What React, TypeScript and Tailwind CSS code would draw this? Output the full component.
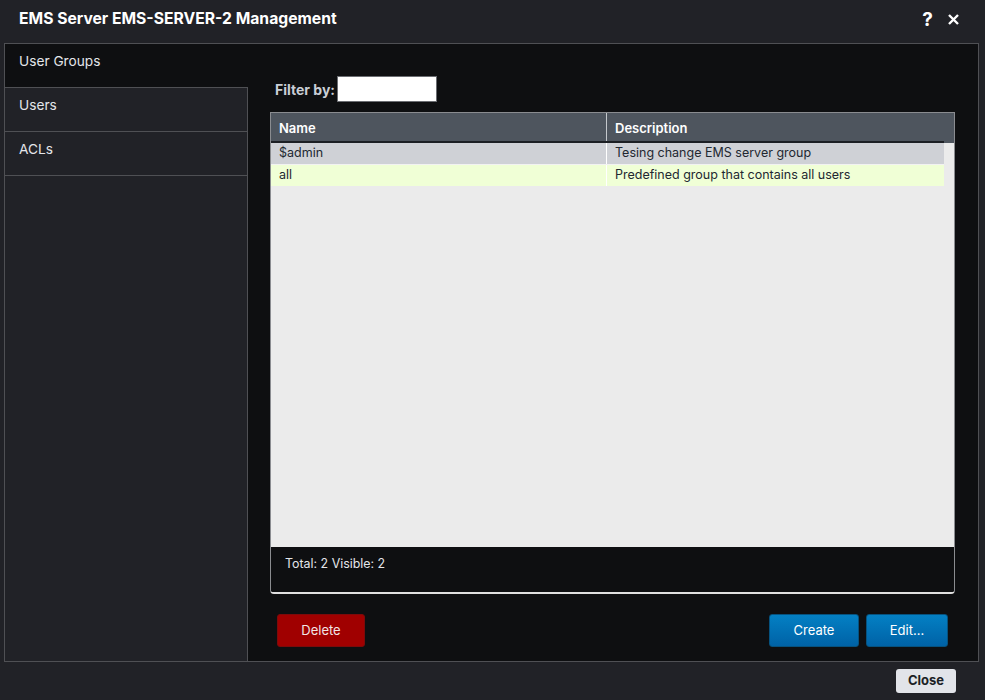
export default function App() {
  return (
    <div className="w-[985px] h-[700px] bg-[#212227] flex flex-col overflow-hidden font-['Inter','Noto_Sans',sans-serif] text-[13px]">
      <div className="h-[43px] flex items-center pl-[19px] pr-[26px] pb-[5px] shrink-0">
        <div className="text-white font-bold text-[15.7px] leading-[36px] flex-1">EMS Server EMS-SERVER-2 Management</div>
        <div className="text-white font-bold text-[19px] mr-[15px] leading-none">?</div>
        <svg width="11" height="11" viewBox="0 0 11 11"><path d="M1 1L10 10M10 1L1 10" stroke="#fff" strokeWidth="2.4" /></svg>
      </div>
      <div className="ml-[4px] w-[975px] h-[619px] border border-[#4f5054] bg-[#0e0f11] flex shrink-0">
        <div className="w-[243px] shrink-0 flex flex-col border-r border-[#4f5054] bg-[#212227] text-[13.7px] text-[#e4e6ea]">
          <div className="h-[44px] bg-[#0e0f11] pl-[14px] pt-[7px] border-b border-[#4f5054] -mr-px">User Groups</div>
          <div className="h-[44px] pl-[14px] pt-[7px] border-b border-[#4f5054]">Users</div>
          <div className="h-[44px] pl-[14px] pt-[7px] border-b border-[#4f5054]">ACLs</div>
        </div>
        <div className="flex-1 flex flex-col pl-[22px] pr-[23px] pt-[32px]">
          <div className="flex items-center h-[26px] pl-[5px]">
            <span className="font-bold text-[14px] text-[#c9ced6] mr-[2px]">Filter by:</span>
            <div className="w-[100px] h-[26px] bg-white border border-[#6b6d72]"></div>
          </div>
          <div className="mt-[10px] h-[482px] w-[685px] flex flex-col border border-[#8a8c90] border-b-2 border-b-[#e0e0e0] rounded-b-[4px] overflow-hidden">
            <div className="h-[30px] shrink-0 bg-[#4e555e] flex text-white font-semibold">
              <div className="w-[336px] pl-[8px] pt-[6px] border-r border-[#c4c8cc]">Name</div>
              <div className="flex-1 pl-[8px] pt-[6px]">Description</div>
            </div>
            <div className="flex-1 bg-[#ebebeb] flex flex-col text-[12.5px] text-[#222831]">
              <div className="w-[673px] h-[2px] -mt-[2px] bg-[#1c1f24]"></div>
              <div className="w-[673px] h-[22px] bg-[#cfd1d6] flex border-b border-[#f2f2f2]">
                <div className="w-[336px] pl-[8px] pt-px border-r border-white">$admin</div>
                <div className="pl-[8px] pt-px">Tesing change EMS server group</div>
              </div>
              <div className="w-[673px] h-[21px] bg-[#f0ffd6] flex">
                <div className="w-[336px] pl-[8px] pt-px border-r border-white">all</div>
                <div className="pl-[8px] pt-px">Predefined group that contains all users</div>
              </div>
            </div>
            <div className="h-[45px] shrink-0 bg-[#0e0f11] text-[#e4e6ea] text-[12.4px] pl-[14px] pt-[8px]">Total: 2 Visible: 2</div>
          </div>
          <div className="mt-[20px] flex pl-[7px] pr-[7px]">
            <button className="w-[88px] h-[33px] pt-[1px] rounded-[3px] bg-[#a00000] text-[#f2e6e6] border border-[#7d0a0a]">Delete</button>
            <div className="flex-1"></div>
            <button className="w-[90px] h-[33px] pt-[1px] rounded-[3px] bg-gradient-to-b from-[#0480c4] to-[#0062a6] text-white border border-[#06527f]">Create</button>
            <button className="ml-[7px] w-[82px] h-[33px] pt-[1px] rounded-[3px] bg-gradient-to-b from-[#0480c4] to-[#0062a6] text-white border border-[#06527f]">Edit...</button>
          </div>
        </div>
      </div>
      <div className="flex justify-end pr-[29px] pt-[7px]">
        <button className="w-[60px] h-[24px] rounded-[3px] bg-[#e2e4e9] text-[#1c1f26] font-bold">Close</button>
      </div>
    </div>
  );
}
